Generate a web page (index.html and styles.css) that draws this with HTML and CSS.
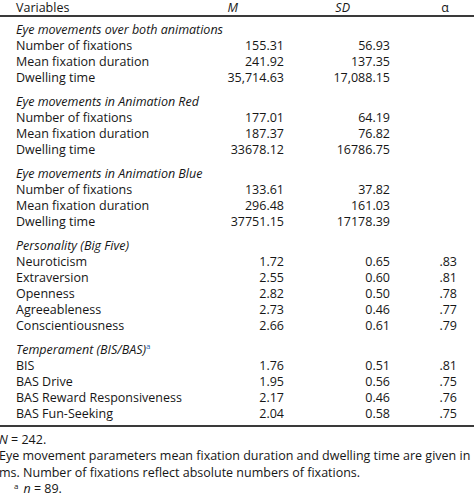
FILE: index.html
```html
<!DOCTYPE html>
<html>
<head>
<meta charset="utf-8">
<link rel="stylesheet" href="styles.css">
</head>
<body>
<div class="page">
  <div class="table">
    <div class="head row">
      <div class="lab">Variables</div>
      <div class="num hm"><i>M</i></div>
      <div class="num hsd"><i>SD</i></div>
      <div class="num ha">α</div>
    </div>
    <div class="body">
      <div class="group">
        <div class="row"><div class="lab it">Eye movements over both animations</div></div>
        <div class="row"><div class="lab">Number of fixations</div><div class="num">155.31</div><div class="num">56.93</div><div class="num"></div></div>
        <div class="row"><div class="lab">Mean fixation duration</div><div class="num">241.92</div><div class="num">137.35</div><div class="num"></div></div>
        <div class="row"><div class="lab">Dwelling time</div><div class="num">35,714.63</div><div class="num">17,088.15</div><div class="num"></div></div>
      </div>
      <div class="group">
        <div class="row"><div class="lab it">Eye movements in Animation Red</div></div>
        <div class="row"><div class="lab">Number of fixations</div><div class="num">177.01</div><div class="num">64.19</div><div class="num"></div></div>
        <div class="row"><div class="lab">Mean fixation duration</div><div class="num">187.37</div><div class="num">76.82</div><div class="num"></div></div>
        <div class="row"><div class="lab">Dwelling time</div><div class="num">33678.12</div><div class="num">16786.75</div><div class="num"></div></div>
      </div>
      <div class="group">
        <div class="row"><div class="lab it">Eye movements in Animation Blue</div></div>
        <div class="row"><div class="lab">Number of fixations</div><div class="num">133.61</div><div class="num">37.82</div><div class="num"></div></div>
        <div class="row"><div class="lab">Mean fixation duration</div><div class="num">296.48</div><div class="num">161.03</div><div class="num"></div></div>
        <div class="row"><div class="lab">Dwelling time</div><div class="num">37751.15</div><div class="num">17178.39</div><div class="num"></div></div>
      </div>
      <div class="group">
        <div class="row"><div class="lab it">Personality (Big Five)</div></div>
        <div class="row"><div class="lab">Neuroticism</div><div class="num">1.72</div><div class="num">0.65</div><div class="num">.83</div></div>
        <div class="row"><div class="lab">Extraversion</div><div class="num">2.55</div><div class="num">0.60</div><div class="num">.81</div></div>
        <div class="row"><div class="lab">Openness</div><div class="num">2.82</div><div class="num">0.50</div><div class="num">.78</div></div>
        <div class="row"><div class="lab">Agreeableness</div><div class="num">2.73</div><div class="num">0.46</div><div class="num">.77</div></div>
        <div class="row"><div class="lab">Conscientiousness</div><div class="num">2.66</div><div class="num">0.61</div><div class="num">.79</div></div>
      </div>
      <div class="group">
        <div class="row"><div class="lab it">Temperament (BIS/BAS)<sup class="ref">a</sup></div></div>
        <div class="row"><div class="lab">BIS</div><div class="num">1.76</div><div class="num">0.51</div><div class="num">.81</div></div>
        <div class="row"><div class="lab">BAS Drive</div><div class="num">1.95</div><div class="num">0.56</div><div class="num">.75</div></div>
        <div class="row"><div class="lab">BAS Reward Responsiveness</div><div class="num">2.17</div><div class="num">0.46</div><div class="num">.76</div></div>
        <div class="row"><div class="lab">BAS Fun-Seeking</div><div class="num">2.04</div><div class="num">0.58</div><div class="num">.75</div></div>
      </div>
    </div>
  </div>
  <div class="notes">
    <p><i>N</i> = 242.</p>
    <p>Eye movement parameters mean fixation duration and dwelling time are given in ms. Number of fixations reflect absolute numbers of fixations.</p>
    <p class="fn"><span class="fnmark">a</span><i>n</i> = 89.</p>
  </div>
</div>
</body>
</html>
```
FILE: styles.css
```css
html, body {
  margin: 0;
  padding: 0;
  background: #ffffff;
}
.page {
  width: 474px;
  font-family: "Open Sans", "Liberation Sans", sans-serif;
  font-size: 12.5px;
  color: #161616;
  overflow: hidden;
}
.table {
  border-bottom: 2px solid #3a3a3a;
}
.row {
  display: grid;
  grid-template-columns: 214px 70px 106px 67px;
  height: 16px;
  line-height: 16px;
}
.row .lab {
  padding-left: 16px;
  white-space: nowrap;
}
.row .num {
  text-align: right;
}
.head {
  border-bottom: 2px solid #3a3a3a;
  height: 15px;
  line-height: 15px;
}
.head .hm { padding-right: 46px; }
.head .hsd { padding-right: 40px; }
.head .ha { padding-right: 8px; }
.body {
  padding-top: 5px;
  padding-bottom: 3px;
}
.group + .group {
  margin-top: 8px;
}
.it {
  font-style: italic;
}
.ref {
  color: #2b5fa8;
  font-size: 8px;
  line-height: 0;
  vertical-align: 5px;
  font-style: normal;
}
.notes {
  padding-top: 5px;
  margin-left: -1px;
  line-height: 16.3px;
}
.notes p {
  margin: 0;
}
.fn {
  padding-left: 15px;
}
.fnmark {
  font-size: 8px;
  vertical-align: 4px;
  line-height: 0;
  margin-right: 5px;
}
```
